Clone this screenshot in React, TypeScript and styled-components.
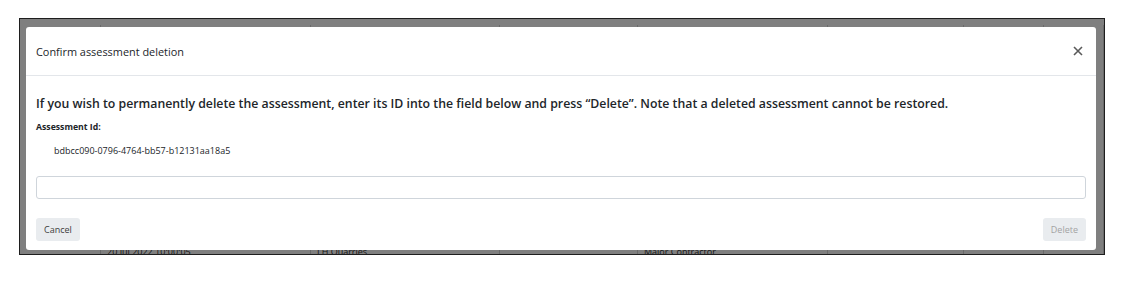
import React from "react";
import styled, { createGlobalStyle } from "styled-components";

const GlobalStyle = createGlobalStyle`
    html, body {
        margin: 0;
        padding: 0;
        background: #ffffff;
    }
    body {
        padding: 18px 0 0 19px;
        font-family: "Open Sans", "Noto Sans", sans-serif;
    }
`;

const columns = [81, 210, 189, 138, 190, 136, 80, 60];

function App() {
    return (
        <>
            <GlobalStyle />
            <Frame>
                <PageBehind>
                    {[0, 1, 2, 3, 4, 5, 6, 7, 8].map((r) => (
                        <TableRow key={r}>
                            {columns.map((w, i) => (
                                <TableCell key={i} style={{ width: w }} />
                            ))}
                        </TableRow>
                    ))}
                    <TableRow>
                        {columns.map((w, i) => (
                            <TableCell key={i} style={{ width: w }}>
                                {i === 1 ? "20 Jul 2022 10:00:05" : i === 2 ? "LH Quarries" : i === 4 ? "Major Contractor" : ""}
                            </TableCell>
                        ))}
                    </TableRow>
                </PageBehind>
                <Backdrop />
                <Modal>
                    <ModalHeader>
                        <ModalTitle>Confirm assessment deletion</ModalTitle>
                        <CloseButton aria-label="Close">
                            <svg width="10" height="10" viewBox="0 0 10 10">
                                <path d="M1 1 L9 9 M9 1 L1 9" stroke="#5a5a5a" strokeWidth="1.6" />
                            </svg>
                        </CloseButton>
                    </ModalHeader>
                    <ModalBody>
                        <Lead>
                            If you wish to permanently delete the assessment, enter its ID into the field below and press
                            “Delete”. Note that a deleted assessment cannot be restored.
                        </Lead>
                        <FieldLabel>Assessment Id:</FieldLabel>
                        <IdValue>bdbcc090-0796-4764-bb57-b12131aa18a5</IdValue>
                        <IdInput type="text" />
                    </ModalBody>
                    <ModalFooter>
                        <FooterButton>Cancel</FooterButton>
                        <FooterButton disabled>Delete</FooterButton>
                    </ModalFooter>
                </Modal>
            </Frame>
        </>
    );
}

export default App;

const Frame = styled.div`
    position: relative;
    width: 1084px;
    height: 235px;
    border: 1px solid #1e1e1e;
    overflow: hidden;
    background: #ffffff;
`;

const PageBehind = styled.div`
    display: flex;
    flex-direction: column;
    padding-top: 6px;
`;

const TableRow = styled.div`
    display: flex;
    height: 24px;
`;

const TableCell = styled.div`
    flex-shrink: 0;
    box-sizing: border-box;
    border-right: 1px solid #d4d4d4;
    font-size: 9px;
    color: #333;
    padding: 4px 0 0 6px;
    white-space: nowrap;
`;

const Backdrop = styled.div`
    position: absolute;
    inset: 0;
    background: rgba(0, 0, 0, 0.5);
`;

const Modal = styled.div`
    position: absolute;
    top: 8px;
    left: 6px;
    width: 1070px;
    height: 223px;
    background: #ffffff;
    border-radius: 3px;
    display: flex;
    flex-direction: column;
`;

const ModalHeader = styled.div`
    display: flex;
    align-items: center;
    justify-content: space-between;
    height: 48px;
    padding: 0 13px 0 10px;
    border-bottom: 1px solid #e3e6ea;
`;

const ModalTitle = styled.h5`
    margin: 0;
    font-size: 10.9px;
    font-weight: 400;
    color: #212529;
`;

const CloseButton = styled.button`
    border: none;
    background: transparent;
    padding: 0;
    display: flex;
    align-items: center;
    cursor: pointer;
`;

const ModalBody = styled.div`
    display: flex;
    flex-direction: column;
    align-items: flex-start;
    padding: 19px 10px 0 10px;
`;

const Lead = styled.p`
    margin: 0;
    font-size: 12.3px;
    font-weight: 600;
    color: #212529;
    line-height: 18px;
`;

const FieldLabel = styled.label`
    margin-top: 8px;
    font-size: 8.7px;
    font-weight: 700;
    color: #212529;
    line-height: 12px;
`;

const IdValue = styled.p`
    margin: 12px 0 0 18px;
    font-size: 9px;
    color: #212529;
    line-height: 12px;
`;

const IdInput = styled.input`
    margin-top: 19px;
    box-sizing: border-box;
    width: 100%;
    height: 23px;
    border: 1px solid #cfd5db;
    border-radius: 3px;
    outline: none;
`;

const ModalFooter = styled.div`
    display: flex;
    justify-content: space-between;
    padding: 19px 10px 0 10px;
`;

const FooterButton = styled.button`
    height: 23px;
    padding: 0 8px;
    border: none;
    border-radius: 3px;
    background: #e9ecef;
    font-family: "Open Sans", "Noto Sans", sans-serif;
    font-size: 9px;
    color: #3d3d3d;
    cursor: pointer;

    &:disabled {
        color: #a3a3a3;
        cursor: default;
    }
`;
